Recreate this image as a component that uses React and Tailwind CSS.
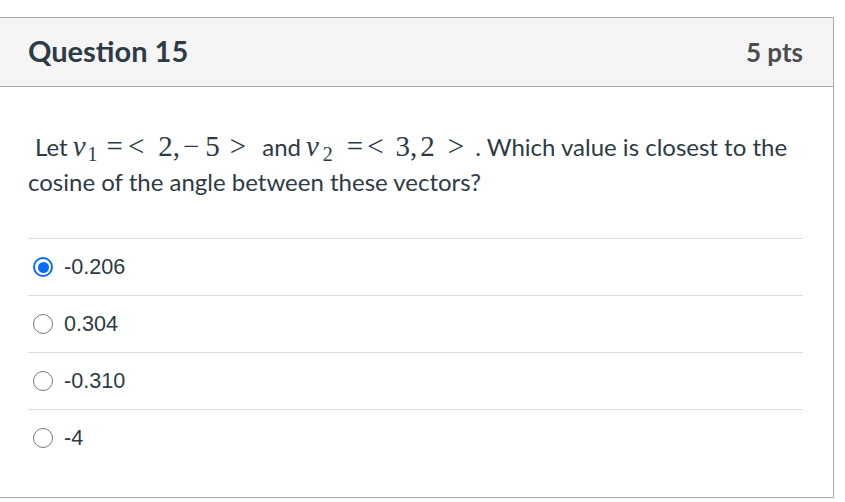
import React from "react";

const lato = { fontFamily: "Lato, 'Open Sans', sans-serif" };
const serif = { fontFamily: "'Liberation Serif', 'DejaVu Serif', serif" };
const arial = { fontFamily: "'Liberation Sans', Arial, sans-serif" };

function Radio({ checked }) {
  if (checked) {
    return (
      <span className="w-[20px] h-[20px] rounded-full border-[2px] border-[#0b6cfa] flex items-center justify-center shrink-0">
        <span className="w-[11px] h-[11px] rounded-full bg-[#0b6cfa]" />
      </span>
    );
  }
  return <span className="w-[20px] h-[20px] rounded-full border-[1.5px] border-[#767676] shrink-0" />;
}

const options = [
  { label: "-0.206", checked: true },
  { label: "0.304" },
  { label: "-0.310" },
  { label: "-4" },
];

export default function App() {
  return (
    <div className="w-[845px] h-[502px] bg-white pt-[17px] overflow-hidden">
      <div className="-ml-px w-[835px] border border-[#a8a8a8] bg-white">
        <div
          className="h-[69px] bg-[#f5f5f5] border-b border-[#a8a8a8] flex items-center justify-between pl-[28px] pr-[30px]"
          style={lato}
        >
          <span className="text-[29px] font-bold text-[#2d3b45] pb-[2px]">Question 15</span>
          <span className="text-[26px] font-bold text-[#4d4d4d]">5 pts</span>
        </div>
        <div className="pl-[28px] pr-[30px] pt-[42px] pb-[31px]">
          <div className="text-[24px] leading-[35px] text-[#2d3b45]" style={lato}>
            <p className="pl-[7px] whitespace-nowrap">
              Let
              <span className="text-[29px] ml-[5px]" style={serif}>
                <i>v</i>
                <sub className="text-[20px] ml-[2px]">1</sub>
                <span className="ml-[9px]">=</span>
                <span className="ml-[5px]">&lt;</span>
                <span className="ml-[14px]">2</span>
                <span>,</span>
                <span className="ml-[3px]">−</span>
                <span className="ml-[6px]">5</span>
                <span className="ml-[10px]">&gt;</span>
              </span>
              <span className="ml-[16px]">and</span>
              <span className="text-[29px] ml-[5px]" style={serif}>
                <i>v</i>
                <sub className="text-[20px] ml-[4px]">2</sub>
                <span className="ml-[14px]">=</span>
                <span className="ml-[4px]">&lt;</span>
                <span className="ml-[12px]">3</span>
                <span>,</span>
                <span className="ml-[3px]">2</span>
                <span className="ml-[13px]">&gt;</span>
              </span>
              <span className="ml-[11px]">. Which value is closest to the</span>
            </p>
            <p>cosine of the angle between these vectors?</p>
          </div>
          <div className="mt-[39px]">
            {options.map((o, i) => (
              <div key={i} className="h-[57px] border-t border-[#dcdcdc] flex items-center gap-[11px] pl-[5px]">
                <Radio checked={o.checked} />
                <span className="text-[21.6px] text-[#2d3b45]" style={arial}>
                  {o.label}
                </span>
              </div>
            ))}
          </div>
        </div>
      </div>
    </div>
  );
}
